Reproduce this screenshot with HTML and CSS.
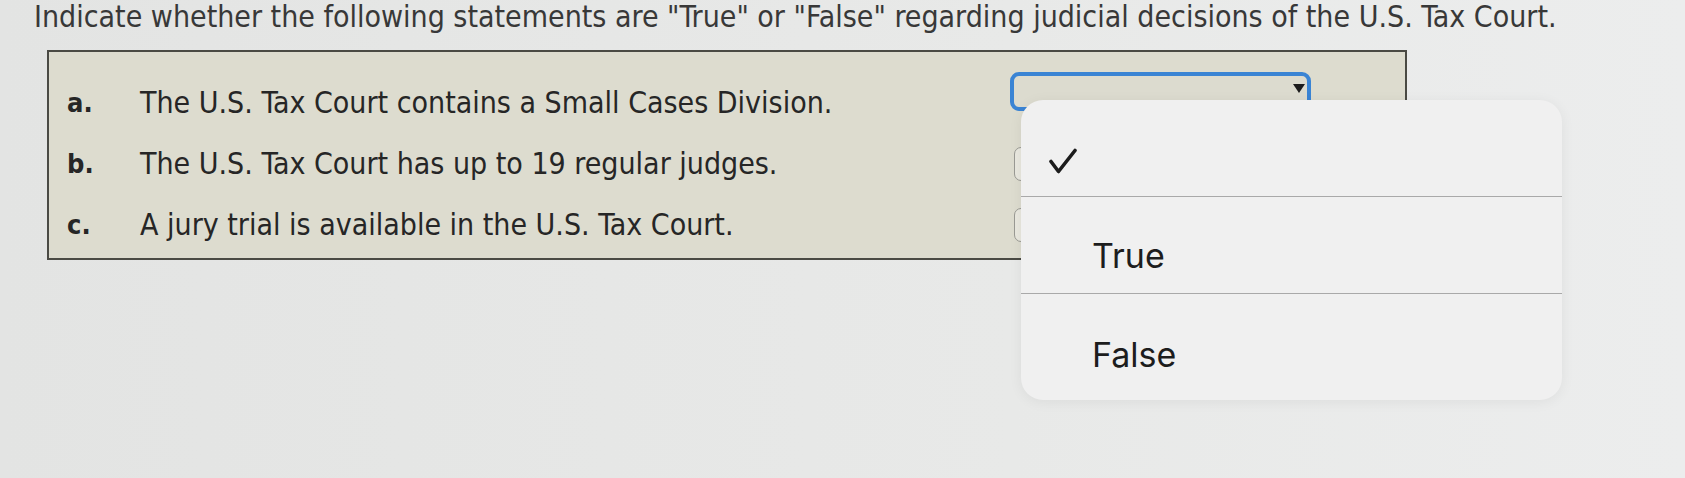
FILE: index.html
```html
<!DOCTYPE html>
<html lang="en">
<head>
<meta charset="utf-8">
<title>U.S. Tax Court</title>
<link rel="stylesheet" href="styles.css">
</head>
<body>
<div class="page">
  <h1 class="title">Indicate whether the following statements are "True" or "False" regarding judicial decisions of the U.S. Tax Court.</h1>
  <div class="panel">
    <div class="row">
      <span class="lbl">a.</span>
      <span class="stmt">The U.S. Tax Court contains a Small Cases Division.</span>
      <div class="select focused"><span class="caret"></span></div>
    </div>
    <div class="row">
      <span class="lbl">b.</span>
      <span class="stmt">The U.S. Tax Court has up to 19 regular judges.</span>
      <div class="select"></div>
    </div>
    <div class="row">
      <span class="lbl">c.</span>
      <span class="stmt">A jury trial is available in the U.S. Tax Court.</span>
      <div class="select"></div>
    </div>
  </div>
  <div class="popover">
    <div class="opt opt-check">
      <svg class="check" width="30" height="26" viewBox="0 0 30 26"><path d="M3 13.5 L10.5 23.5 L27 2.5" fill="none" stroke="#1c1c1c" stroke-width="3.6" stroke-linecap="round" stroke-linejoin="round"/></svg>
    </div>
    <div class="opt">True</div>
    <div class="opt opt-last">False</div>
  </div>
</div>
</body>
</html>
```
FILE: styles.css
```css
html, body {
  margin: 0;
  padding: 0;
}
body {
  background: #e6e7e6;
  width: 1685px;
  height: 478px;
  overflow: hidden;
}
.page {
  position: relative;
  width: 1685px;
  height: 478px;
  background: linear-gradient(90deg, #e3e4e3 0%, #e8e9e8 60%, #eceded 100%);
}
.title {
  margin: 0;
  padding-left: 34px;
  font-family: "DejaVu Sans Condensed", "DejaVu Sans", sans-serif;
  font-stretch: condensed;
  font-weight: normal;
  font-size: 30px;
  line-height: 34px;
  color: #383838;
  white-space: nowrap;
}
.panel {
  margin: 16px 0 0 47px;
  width: 1356px;
  border: 2px solid #4a4a44;
  background: #dddccf;
  padding: 20px 0 3px 0;
  box-sizing: content-box;
}
.row {
  display: grid;
  grid-template-columns: 18px 73px 870px 301px;
  grid-template-areas: ". lbl stmt sel";
  height: 61px;
  align-items: center;
  font-family: "DejaVu Sans Condensed", "DejaVu Sans", sans-serif;
  font-stretch: condensed;
  font-size: 30px;
  line-height: 34px;
  color: #262626;
}
.lbl {
  grid-area: lbl;
  font-weight: bold;
  font-size: 27px;
}
.stmt {
  grid-area: stmt;
  white-space: nowrap;
}
.select {
  grid-area: sel;
  height: 34px;
  margin-left: 4px;
  border: 1px solid #9a9a94;
  border-radius: 7px;
  background: #e9e8df;
  box-sizing: border-box;
}
.select.focused {
  position: relative;
  align-self: start;
  margin-left: 0;
  height: 39px;
  border: 4px solid #3a84d4;
  border-radius: 9px;
  background: #dcdbcf;
}
.caret {
  position: absolute;
  right: 2px;
  top: 8px;
  width: 0;
  height: 0;
  border-left: 6px solid transparent;
  border-right: 6px solid transparent;
  border-top: 9px solid #1c1c1c;
}
.popover {
  position: absolute;
  left: 1021px;
  top: 100px;
  width: 541px;
  height: 300px;
  background: #f0f0f0;
  border-radius: 22px;
  box-shadow: 0 2px 14px rgba(0, 0, 0, 0.06);
  display: flex;
  flex-direction: column;
  overflow: hidden;
}
.opt {
  height: 97px;
  box-sizing: border-box;
  display: flex;
  align-items: center;
  padding: 20px 0 0 71px;
  border-bottom: 1px solid #a9a9a9;
  font-family: Inter, "Liberation Sans", sans-serif;
  font-size: 34px;
  color: #1d1d1d;
}
.opt-check {
  padding-left: 27px;
  padding-top: 26px;
}
.opt-last {
  flex: 1;
  border-bottom: none;
  padding-top: 14px;
}
.check {
  display: block;
}
```
